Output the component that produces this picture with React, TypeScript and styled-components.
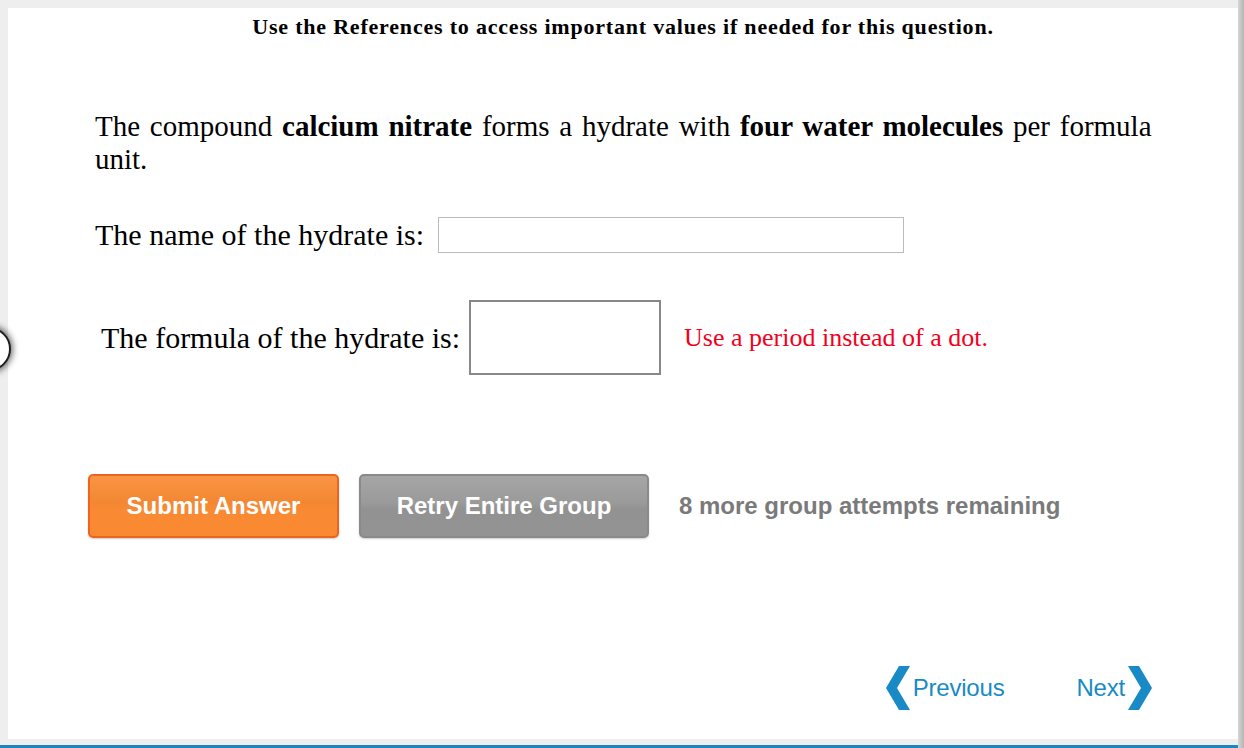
import styled, { createGlobalStyle } from 'styled-components';

const GlobalStyle = createGlobalStyle`
    html, body {
        margin: 0;
        padding: 0;
        background: #eeeeee;
        overflow: hidden;
    }
`

const Chevron = ({ dir }: { dir: 'left' | 'right' }) => (
    <svg width="25" height="44" viewBox="0 0 25 44">
        {dir === 'left'
            ? <polygon points="13,0 24,0 11,22 24,44 13,44 0,22" fill="#1a8ac6" />
            : <polygon points="12,0 1,0 14,22 1,44 12,44 25,22" fill="#1a8ac6" />}
    </svg>
)

const App = () => {
    return (
        <Page>
            <GlobalStyle />
            <Main>
                <Panel>
                    <Header>Use the References to access important values if needed for this question.</Header>
                    <Question>
                        The compound <b>calcium nitrate</b> forms a hydrate with <b>four water molecules</b> per formula unit.
                    </Question>
                    <Row>
                        <Label>The name of the hydrate is:</Label>
                        <NameInput type="text" />
                    </Row>
                    <Row $indent={6} $gap={9}>
                        <Label>The formula of the hydrate is:</Label>
                        <FormulaInput type="text" />
                        <Hint>Use a period instead of a dot.</Hint>
                    </Row>
                    <Actions>
                        <Button $variant="submit">Submit Answer</Button>
                        <Button $variant="retry">Retry Entire Group</Button>
                        <Attempts>8 more group attempts remaining</Attempts>
                    </Actions>
                    <Nav>
                        <NavLink><Chevron dir="left" />Previous</NavLink>
                        <NavLink>Next<Chevron dir="right" /></NavLink>
                    </Nav>
                </Panel>
                <BottomLine />
            </Main>
            <Strip />
            <Bubble />
        </Page>
    )
}

const Page = styled.div`
    position: relative;
    display: flex;
    width: 1244px;
    height: 748px;
    overflow: hidden;
`

const Main = styled.div`
    flex: 1;
    display: flex;
    flex-direction: column;
    padding-top: 8px;
`

const Panel = styled.div`
    margin-left: 8px;
    height: 731px;
    background: #ffffff;
    display: flex;
    flex-direction: column;
    font-family: "Liberation Serif", "Times New Roman", serif;
    color: #000;
`

const BottomLine = styled.div`
    margin-top: 6px;
    height: 3px;
    background: #1a87c0;
`

const Strip = styled.div`
    width: 6px;
    background: linear-gradient(to right, #d6d6d6, #b4b4b4);
`

const Bubble = styled.div`
    position: absolute;
    left: -33px;
    top: 327px;
    width: 40px;
    height: 40px;
    border-radius: 50%;
    background: #fff;
    border: 2px solid #1e1e1e;
    box-shadow: 0 0 6px 2px rgba(0, 0, 0, 0.55);
`

const Header = styled.div`
    padding-top: 8px;
    font-size: 22px;
    letter-spacing: 0.8px;
    line-height: 22px;
    font-weight: bold;
    text-align: center;
`

const Question = styled.p`
    margin: 72px 50px 0 87px;
    font-size: 29px;
    word-spacing: 2.5px;
    line-height: 33px;
`

const Row = styled.div<{ $indent?: number; $gap?: number }>`
    display: flex;
    align-items: center;
    margin-top: 41px;
    padding-left: ${p => 87 + (p.$indent ?? 0)}px;
    gap: ${p => p.$gap ?? 14}px;
    & + & {
        margin-top: 47px;
    }
`

const Label = styled.span`
    font-size: 30px;
`

const NameInput = styled.input`
    box-sizing: border-box;
    width: 466px;
    height: 36px;
    border: 1px solid #bbbbbb;
    outline: none;
    margin: 0;
`

const FormulaInput = styled.input`
    box-sizing: border-box;
    width: 192px;
    height: 75px;
    border: 2px solid #888888;
    outline: none;
    margin: 0 14px 0 0;
`

const Hint = styled.span`
    font-size: 26px;
    color: #f4001a;
`

const Actions = styled.div`
    display: flex;
    align-items: center;
    gap: 20px;
    margin-top: 99px;
    padding-left: 80px;
    font-family: "Liberation Sans", Arial, sans-serif;
`

const Button = styled.button<{ $variant: 'submit' | 'retry' }>`
    box-sizing: border-box;
    height: 64px;
    width: ${p => (p.$variant === 'submit' ? 251 : 290)}px;
    border-radius: 5px;
    border: 2px solid ${p => (p.$variant === 'submit' ? '#ec6420' : '#8a8a8a')};
    background: ${p => p.$variant === 'submit'
        ? 'linear-gradient(to bottom, #fa9444 0%, #f28732 45%, #f98a33 55%, #fa8a32 100%)'
        : 'linear-gradient(to bottom, #a6a6a6 0%, #9a9a9a 45%, #929292 55%, #939393 100%)'};
    color: #ffffff;
    font-family: "Liberation Sans", Arial, sans-serif;
    font-size: 24px;
    font-weight: bold;
    padding: 0;
    box-shadow: 0 1px 2px rgba(0, 0, 0, 0.2);
`

const Attempts = styled.span`
    margin-left: 10px;
    font-size: 24px;
    font-weight: bold;
    color: #7a7a7a;
`

const Nav = styled.div`
    display: flex;
    justify-content: flex-end;
    gap: 72px;
    margin-top: 128px;
    padding-right: 86px;
`

const NavLink = styled.a`
    display: flex;
    align-items: center;
    gap: 2px;
    font-family: "Liberation Sans", Arial, sans-serif;
    font-size: 24px;
    letter-spacing: -0.2px;
    color: #1a8ac6;
    cursor: pointer;
`

export default App;
